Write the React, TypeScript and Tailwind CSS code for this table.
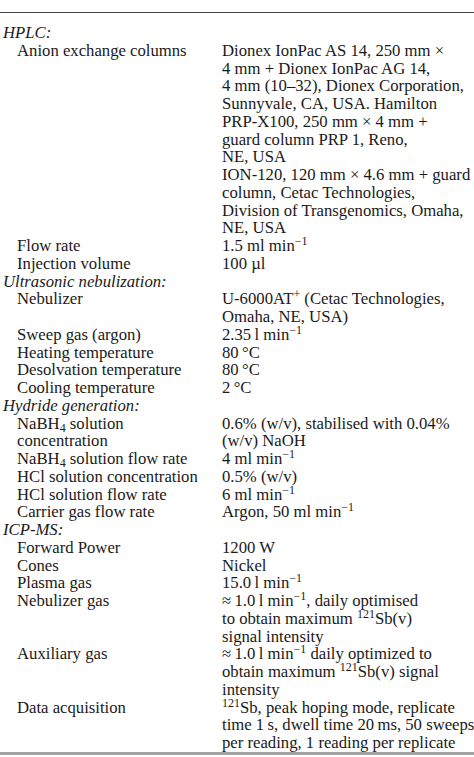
import React from 'react';

type Item = { label: React.ReactNode[]; value: React.ReactNode[] };
type Section = { title: string; items: Item[] };

const Sup = ({ children }: { children: React.ReactNode }) => (
  <sup className="text-[12px]">{children}</sup>
);
const Sub = ({ children }: { children: React.ReactNode }) => (
  <sub className="text-[12px]">{children}</sub>
);

const perMin = <Sup>−1</Sup>;
// thin space, as in the typeset table
const t = '\u2009';

const sections: Section[] = [
  {
    title: 'HPLC:',
    items: [
      {
        label: ['Anion exchange columns'],
        value: [
          'Dionex IonPac AS 14, 250 mm ×',
          '4 mm + Dionex IonPac AG 14,',
          '4 mm (10–32), Dionex Corporation,',
          'Sunnyvale, CA, USA. Hamilton',
          'PRP-X100, 250 mm × 4 mm +',
          'guard column PRP 1, Reno,',
          'NE, USA',
          'ION-120, 120 mm × 4.6 mm + guard',
          'column, Cetac Technologies,',
          'Division of Transgenomics, Omaha,',
          'NE, USA',
        ],
      },
      { label: ['Flow rate'], value: [<>1.5 ml min{perMin}</>] },
      { label: ['Injection volume'], value: ['100 µl'] },
    ],
  },
  {
    title: 'Ultrasonic nebulization:',
    items: [
      {
        label: ['Nebulizer'],
        value: [<>U-6000AT<Sup>+</Sup> (Cetac Technologies,</>, 'Omaha, NE, USA)'],
      },
      { label: ['Sweep gas (argon)'], value: [<>2.35{t}l min{perMin}</>] },
      { label: ['Heating temperature'], value: [`80${t}°C`] },
      { label: ['Desolvation temperature'], value: [`80${t}°C`] },
      { label: ['Cooling temperature'], value: [`2${t}°C`] },
    ],
  },
  {
    title: 'Hydride generation:',
    items: [
      {
        label: [<>NaBH<Sub>4</Sub> solution</>, 'concentration'],
        value: ['0.6% (w/v), stabilised with 0.04%', '(w/v) NaOH'],
      },
      {
        label: [<>NaBH<Sub>4</Sub> solution flow rate</>],
        value: [<>4 ml min{perMin}</>],
      },
      { label: ['HCl solution concentration'], value: ['0.5% (w/v)'] },
      { label: ['HCl solution flow rate'], value: [<>6 ml min{perMin}</>] },
      { label: ['Carrier gas flow rate'], value: [<>Argon, 50 ml min{perMin}</>] },
    ],
  },
  {
    title: 'ICP-MS:',
    items: [
      { label: ['Forward Power'], value: ['1200 W'] },
      { label: ['Cones'], value: ['Nickel'] },
      { label: ['Plasma gas'], value: [<>15.0{t}l min{perMin}</>] },
      {
        label: ['Nebulizer gas'],
        value: [
          <>≈{t}1.0{t}l min{perMin}, daily optimised</>,
          <>to obtain maximum <Sup>121</Sup>Sb(v)</>,
          'signal intensity',
        ],
      },
      {
        label: ['Auxiliary gas'],
        value: [
          <>≈{t}1.0{t}l min{perMin} daily optimized to</>,
          <>obtain maximum <Sup>121</Sup>Sb(v) signal</>,
          'intensity',
        ],
      },
      {
        label: ['Data acquisition'],
        value: [
          <><Sup>121</Sup>Sb, peak hoping mode, replicate</>,
          `time 1${t}s, dwell time 20${t}ms, 50 sweeps`,
          'per reading, 1 reading per replicate',
        ],
      },
    ],
  },
];

export default function App() {
  return (
    <div
      className="w-[474px] h-[757px] overflow-hidden bg-white text-[#1a1a1a] text-[16.7px] leading-[17.75px]"
      style={{ fontFamily: '"Liberation Serif", "Times New Roman", serif' }}
    >
      <div className="h-[12px]" />
      <div className="border-t border-[#444]" />
      <div className="pt-[11px] border-b-[3px] border-[#a3a3a3]">
        {sections.map((s) => (
          <div key={s.title}>
            <div className="pl-[3px] italic whitespace-nowrap">{s.title}</div>
            {s.items.map((item, i) => (
              <div key={i} className="grid grid-cols-[222px_1fr]">
                <div className="pl-[17px]">
                  {item.label.map((l, j) => (
                    <div key={j} className="whitespace-nowrap">{l}</div>
                  ))}
                </div>
                <div>
                  {item.value.map((v, j) => (
                    <div key={j} className="whitespace-nowrap">{v}</div>
                  ))}
                </div>
              </div>
            ))}
          </div>
        ))}
      </div>
    </div>
  );
}
